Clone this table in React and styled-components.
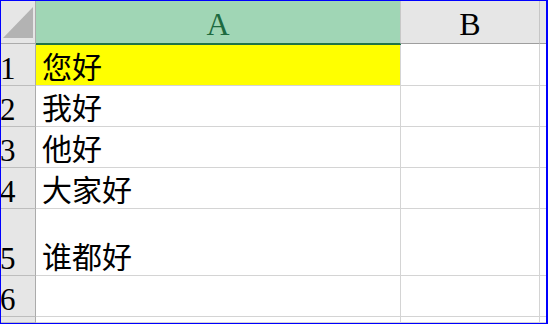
import React from "react"
import styled, { createGlobalStyle } from "styled-components"

const GlobalStyle = createGlobalStyle`
  html, body {
    margin: 0;
    padding: 0;
    background: #ffffff;
  }
  * {
    box-sizing: border-box;
  }
`

const rows = [
  { n: "1", text: "您好", h: 42, fill: "#ffff00" },
  { n: "2", text: "我好", h: 41 },
  { n: "3", text: "他好", h: 41 },
  { n: "4", text: "大家好", h: 41 },
  { n: "5", text: "谁都好", h: 67 },
  { n: "6", text: "", h: 41 },
  { n: "", text: "", h: 6 },
]

export default function App() {
  return (
    <>
      <GlobalStyle />
      <Frame>
        <Sheet $rows={rows.map((r) => r.h + "px").join(" ")}>
          <Corner>
            <svg width="30" height="31" viewBox="0 0 30 31">
              <polygon points="0,31 30,0 30,31" fill="#b3b3b3" />
            </svg>
          </Corner>
          <ColHead $active>A</ColHead>
          <ColHead>B</ColHead>
          <ColHead />

          {rows.map((r, i) => (
            <React.Fragment key={i}>
              <RowHead>{r.n}</RowHead>
              <Cell $fill={r.fill}>{r.text}</Cell>
              <Cell />
              <Cell />
            </React.Fragment>
          ))}
        </Sheet>
      </Frame>
    </>
  )
}

const Frame = styled.div`
  width: 548px;
  height: 324px;
  border-style: solid;
  border-color: #0000ff;
  border-width: 1px 2px 1px 1px;
  overflow: hidden;
  background: #ffffff;
`

const Sheet = styled.div`
  display: grid;
  grid-template-columns: 35px 365px 139px 1fr;
  grid-template-rows: 43px ${(p) => p.$rows};
  height: 100%;
`

const Corner = styled.div`
  background: #e6e6e6;
  border-right: 1px solid #ababab;
  border-bottom: 1px solid #ababab;
  display: flex;
  align-items: flex-end;
  justify-content: flex-end;
  padding: 0 2px 5px 0;

  svg {
    display: block;
  }
`

const ColHead = styled.div`
  position: relative;
  z-index: 1;
  display: flex;
  align-items: center;
  justify-content: center;
  background: ${(p) => (p.$active ? "#a0d6b5" : "#e6e6e6")};
  color: ${(p) => (p.$active ? "#1d6a3f" : "#000000")};
  border-right: 1px solid ${(p) => (p.$active ? "#c8c8c8" : "#c6c6c6")};
  border-bottom: 1px solid ${(p) => (p.$active ? "#217346" : "#9e9e9e")};
  box-shadow: ${(p) => (p.$active ? "0 1px 0 #217346" : "none")};
  font-family: "Liberation Serif", serif;
  font-size: 32px;
  line-height: 1;
  padding-top: 3px;
`

const RowHead = styled.div`
  display: flex;
  align-items: flex-end;
  background: #e6e6e6;
  border-right: 1px solid #ababab;
  border-bottom: 1px solid #bdbdbd;
  font-family: "Liberation Serif", serif;
  font-size: 31px;
  line-height: 1;
  color: #000000;
  padding: 0 0 1px 0;
  margin-left: -1px;
  overflow: hidden;
`

const Cell = styled.div`
  display: flex;
  align-items: flex-end;
  background: ${(p) => p.$fill || "#ffffff"};
  border-right: 1px solid #d4d4d4;
  border-bottom: 1px solid #d4d4d4;
  font-family: "Noto Sans CJK SC", sans-serif;
  font-size: 30px;
  line-height: 1.2;
  color: #000000;
  padding: 0 0 2px 6px;
  white-space: nowrap;
`
